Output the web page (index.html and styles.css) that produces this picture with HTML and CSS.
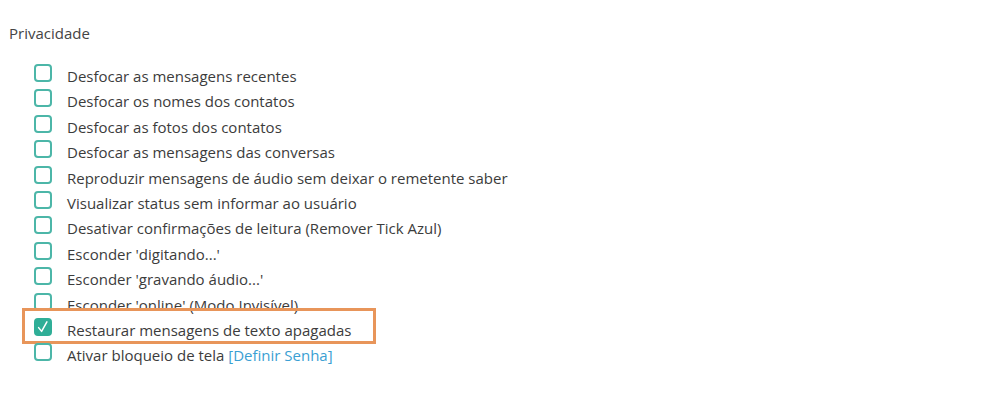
FILE: index.html
```html
<!DOCTYPE html>
<html lang="pt">
<head>
<meta charset="utf-8">
<link rel="stylesheet" href="styles.css">
</head>
<body>
<div class="panel">
  <div class="title">Privacidade</div>
  <ul class="options">
    <li class="opt"><span class="box"></span><span class="label">Desfocar as mensagens recentes</span></li>
    <li class="opt"><span class="box"></span><span class="label">Desfocar os nomes dos contatos</span></li>
    <li class="opt"><span class="box"></span><span class="label">Desfocar as fotos dos contatos</span></li>
    <li class="opt"><span class="box"></span><span class="label">Desfocar as mensagens das conversas</span></li>
    <li class="opt"><span class="box"></span><span class="label">Reproduzir mensagens de áudio sem deixar o remetente saber</span></li>
    <li class="opt"><span class="box"></span><span class="label">Visualizar status sem informar ao usuário</span></li>
    <li class="opt"><span class="box"></span><span class="label">Desativar confirmações de leitura (Remover Tick Azul)</span></li>
    <li class="opt"><span class="box"></span><span class="label">Esconder 'digitando...'</span></li>
    <li class="opt"><span class="box"></span><span class="label">Esconder 'gravando áudio...'</span></li>
    <li class="opt"><span class="box"></span><span class="label">Esconder 'online' (Modo Invisível)</span></li>
    <li class="opt highlighted"><span class="box checked"><svg viewBox="0 0 18 18" width="18" height="18"><path d="M4.6 9.6 L7.6 13.4 L12.9 3.8" fill="none" stroke="#fff" stroke-width="1.5" stroke-linecap="round" stroke-linejoin="round"/></svg></span><span class="label">Restaurar mensagens de texto apagadas</span><span class="mark"></span></li>
    <li class="opt"><span class="box"></span><span class="label">Ativar bloqueio de tela <a class="link" href="#">[Definir Senha]</a></span></li>
  </ul>
</div>
</body>
</html>
```
FILE: styles.css
```css
html, body {
  margin: 0;
  padding: 0;
  background: #ffffff;
}
body {
  font-family: "Open Sans", "Noto Sans", sans-serif;
  color: #3a3a3a;
  width: 984px;
  height: 410px;
  overflow: hidden;
}
.panel {
  padding: 23px 0 0 9px;
}
.title {
  font-size: 15px;
  line-height: 21px;
  color: #444;
}
.options {
  list-style: none;
  margin: 20px 0 0 0;
  padding: 0 0 0 25px;
}
.opt {
  position: relative;
  display: flex;
  align-items: flex-start;
  height: 25.4px;
}
.box {
  flex: none;
  width: 18px;
  height: 18px;
  box-sizing: border-box;
  border: 2px solid #4cb6a8;
  border-radius: 4px;
  margin-right: 15px;
  background: #fff;
}
.box.checked {
  background: #2fae97;
  border-color: #2fae97;
  display: flex;
  align-items: center;
  justify-content: center;
}
.box.checked svg {
  display: block;
  flex: none;
}
.label {
  font-size: 15px;
  line-height: 25.4px;
  color: #3c3c3c;
  white-space: nowrap;
}
.link {
  color: #3a9fd3;
  text-decoration: none;
}
.mark {
  position: absolute;
  left: -12px;
  top: -10px;
  width: 354px;
  height: 36px;
  box-sizing: border-box;
  border: 3px solid #e8955a;
  pointer-events: none;
}
```
